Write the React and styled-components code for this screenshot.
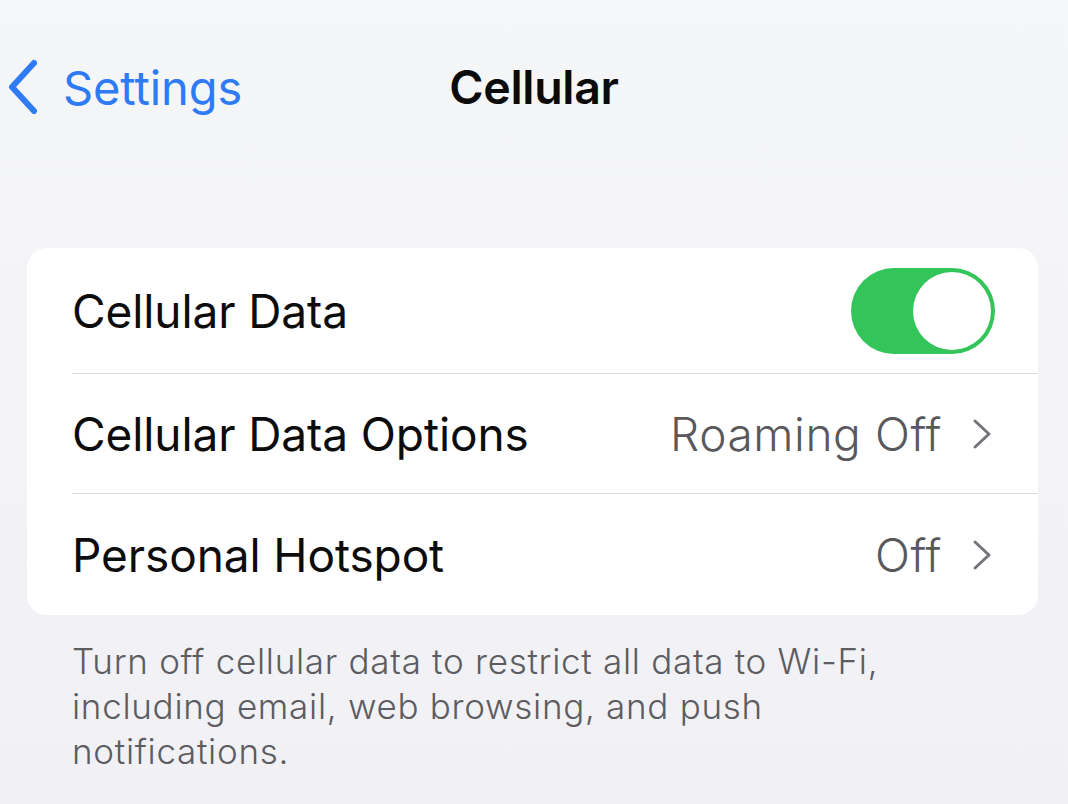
import styled, { createGlobalStyle } from 'styled-components';

const GlobalStyle = createGlobalStyle`
  html, body {
    margin: 0;
    padding: 0;
    background: #f2f2f6;
  }
  body {
    font-family: Inter, "Noto Sans", "Liberation Sans", sans-serif;
    -webkit-font-smoothing: antialiased;
  }
`;

const Page = styled.div`
  width: 1068px;
  height: 804px;
  overflow: hidden;
  background: linear-gradient(180deg, #f5f6f8 0%, #f1f1f5 100%);
`;

const NavBar = styled.header`
  height: 174px;
  display: grid;
  grid-template-columns: 1fr auto 1fr;
  align-items: center;
`;

const BackLink = styled.a`
  display: flex;
  align-items: center;
  gap: 24px;
  padding-left: 7px;
  color: #2f7bf5;
  font-size: 47px;
  font-weight: 400;
  text-decoration: none;
  letter-spacing: -0.1px;
  svg {
    display: block;
  }
`;

const Title = styled.h1`
  margin: 0;
  font-size: 46.5px;
  font-weight: 600;
  color: #0a0a0a;
  letter-spacing: -0.3px;
`;

const Card = styled.section`
  margin: 74px 30px 0 27px;
  background: #ffffff;
  border-radius: 20px;
  overflow: hidden;
`;

const Row = styled.div`
  height: ${(p) => p.$h}px;
  margin-left: 45px;
  padding-right: ${(p) => p.$pr}px;
  display: flex;
  align-items: center;
  justify-content: space-between;
  border-top: ${(p) => (p.$first ? 'none' : '1.5px solid #dcdce0')};
  box-sizing: border-box;
`;

const Label = styled.span`
  font-size: 46px;
  color: #0c0c0c;
  letter-spacing: -0.1px;
`;

const Detail = styled.span`
  display: flex;
  align-items: center;
  gap: 30px;
  font-size: 46px;
  font-weight: 300;
  color: #58585d;
  letter-spacing: 0.6px;
`;

const Switch = styled.div`
  width: 144px;
  height: 86px;
  border-radius: 43px;
  background: #33c45a;
  position: relative;
  &::after {
    content: '';
    position: absolute;
    right: 4px;
    top: 4px;
    width: 78px;
    height: 78px;
    border-radius: 50%;
    background: #ffffff;
  }
`;

const Footer = styled.p`
  margin: 24px 0 0 72px;
  width: 840px;
  font-size: 35px;
  line-height: 45px;
  font-weight: 300;
  color: #5c5c61;
  letter-spacing: 0.7px;
`;

const Chevron = () => (
  <svg width="20" height="32" viewBox="0 0 20 32">
    <path d="M3 3 L17 16 L3 29" fill="none" stroke="#74747a" strokeWidth="3" strokeLinecap="round" strokeLinejoin="round" />
  </svg>
);

const BackChevron = () => (
  <svg width="32" height="56" viewBox="0 0 32 56">
    <path d="M27 4 L5 28 L27 52" fill="none" stroke="#2f7bf5" strokeWidth="6" strokeLinecap="round" strokeLinejoin="round" />
  </svg>
);

export default function App() {
  return (
    <Page>
      <GlobalStyle />
      <NavBar>
        <BackLink href="#">
          <BackChevron />
          Settings
        </BackLink>
        <Title>Cellular</Title>
        <span />
      </NavBar>
      <Card>
        <Row $first $h={125} $pr={43}>
          <Label>Cellular Data</Label>
          <Switch />
        </Row>
        <Row $h={120} $pr={46}>
          <Label>Cellular Data Options</Label>
          <Detail>
            Roaming Off
            <Chevron />
          </Detail>
        </Row>
        <Row $h={122} $pr={46}>
          <Label>Personal Hotspot</Label>
          <Detail>
            Off
            <Chevron />
          </Detail>
        </Row>
      </Card>
      <Footer>
        Turn off cellular data to restrict all data to Wi-Fi, including email, web browsing, and push notifications.
      </Footer>
    </Page>
  );
}
